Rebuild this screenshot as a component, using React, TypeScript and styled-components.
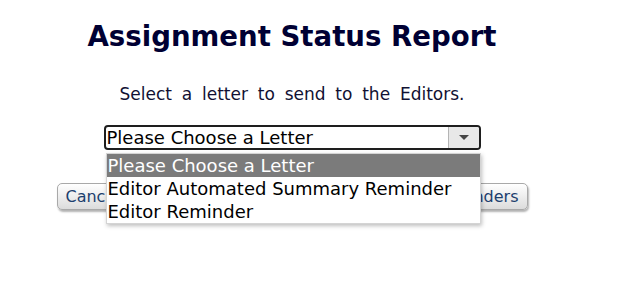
import React from "react";
import styled, { createGlobalStyle } from "styled-components";

const Global = createGlobalStyle`
  html, body { margin: 0; padding: 0; background: #ffffff; }
  body { font-family: "DejaVu Sans", Verdana, sans-serif; }
`;

const Page = styled.div`
  width: 568px;
  min-height: 295px;
  box-sizing: border-box;
  margin-left: 8px;
  padding-top: 21px;
  display: flex;
  flex-direction: column;
  align-items: center;
`;

const Title = styled.h1`
  margin: 0;
  font-size: 27.6px;
  line-height: 32px;
  font-weight: bold;
  color: #000033;
`;

const Subtitle = styled.p`
  margin: 31px 0 0;
  font-size: 17px;
  line-height: 20px;
  word-spacing: 4.4px;
  color: #111133;
`;

const SelectWrap = styled.div`
  position: relative;
  margin-top: 21px;
  width: 377px;
`;

const SelectBox = styled.div`
  box-sizing: border-box;
  height: 25px;
  border: 2px solid #1e1e1e;
  border-radius: 4px;
  display: flex;
  align-items: stretch;
  background: #fff;
  overflow: hidden;
`;

const SelectText = styled.div`
  flex: 1;
  font-size: 18px;
  line-height: 21px;
  padding-left: 1px;
  color: #000;
  white-space: nowrap;
`;

const ArrowCell = styled.div`
  width: 30px;
  background: #e8e8e8;
  border-left: 1px solid #b4b4b4;
  display: flex;
  align-items: center;
  justify-content: center;
`;

const List = styled.ul`
  position: absolute;
  left: 2px;
  top: 28px;
  width: 375px;
  box-sizing: border-box;
  margin: 0;
  padding: 0;
  list-style: none;
  background: #fff;
  border: 1px solid #d4d4d4;
  box-shadow: 1px 2px 4px rgba(0, 0, 0, 0.25);
  z-index: 2;
`;

const Item = styled.li<{ $active?: boolean }>`
  font-size: 18px;
  line-height: 23px;
  height: 23px;
  padding-left: 1px;
  white-space: nowrap;
  background: ${(p) => (p.$active ? "#7b7b7b" : "#fff")};
  color: ${(p) => (p.$active ? "#fff" : "#000")};
`;

const ButtonRow = styled.div`
  margin-top: 33px;
  width: 471px;
  display: flex;
  justify-content: space-between;
`;

const Button = styled.button`
  font-family: "DejaVu Sans", Verdana, sans-serif;
  font-size: 16px;
  height: 27px;
  padding: 0 8px;
  color: #1c3f6e;
  border: 1px solid #a9a9a9;
  border-radius: 5px;
  background: linear-gradient(#ffffff, #dcdcdc);
  box-shadow: 1px 2px 2px rgba(0, 0, 0, 0.3);
`;

export default function App() {
  return (
    <>
      <Global />
      <Page>
        <Title>Assignment Status Report</Title>
        <Subtitle>Select a letter to send to the Editors.</Subtitle>
        <SelectWrap>
          <SelectBox>
            <SelectText>Please Choose a Letter</SelectText>
            <ArrowCell>
              <svg width="10" height="6" viewBox="0 0 10 6">
                <path d="M0 0 L10 0 L5 5 Z" fill="#444" />
              </svg>
            </ArrowCell>
          </SelectBox>
          <List>
            <Item $active>Please Choose a Letter</Item>
            <Item>Editor Automated Summary Reminder</Item>
            <Item>Editor Reminder</Item>
          </List>
        </SelectWrap>
        <ButtonRow>
          <Button>Cancel</Button>
          <Button>Send Reminders</Button>
        </ButtonRow>
      </Page>
    </>
  );
}
